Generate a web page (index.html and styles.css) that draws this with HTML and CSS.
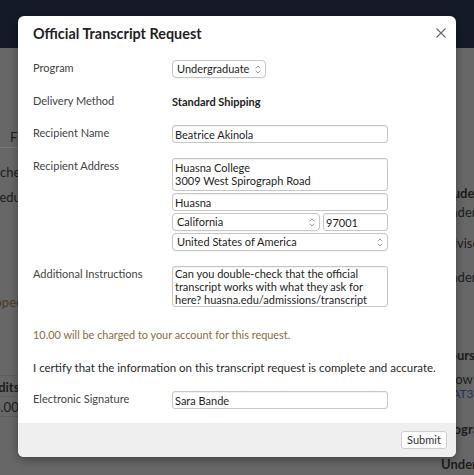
FILE: index.html
```html
<!DOCTYPE html>
<html lang="en">
<head>
<meta charset="utf-8">
<title>Official Transcript Request</title>
<link rel="stylesheet" href="styles.css">
</head>
<body>
<div class="page">
  <div class="topbar"></div>
  <div class="page-main">
    <div class="bg-left">
      <div class="bg-row bg-first"><span class="ind-a">Filters</span></div>
      <div class="bg-row bg-sched"><span class="ind-b">Scheduled</span></div>
      <div class="bg-row bg-sched2"><span class="ind-c">Schedule</span></div>
      <div class="bg-row bg-drop"><span class="ind-d bg-warn">Dropped</span></div>
      <div class="bg-row bg-cred"><span class="ind-e bg-bold">Credits</span></div>
      <div class="bg-row bg-val"><span class="ind-f">3.00</span></div>
    </div>
    <div class="bg-right">
      <div class="r-row r-student bg-bold">Student</div>
      <div class="r-row r-ug">Undergraduate</div>
      <div class="r-row r-adv">Advisor</div>
      <div class="r-row r-ug2">Undergraduate</div>
      <div class="r-row r-courses bg-bold">Courses</div>
      <div class="r-row r-show">Show <span class="r-box"></span></div>
      <div class="r-row r-mat bg-link">MAT300</div>
      <div class="r-row r-prog bg-bold">Program</div>
      <div class="r-row r-ug3 bg-bold">Undergraduate</div>
    </div>
  </div>
</div>

<div class="modal">
  <div class="modal-header">
    <h4 class="modal-title">Official Transcript Request</h4>
    <button class="close" type="button" aria-label="Close">
      <svg width="10" height="10" viewBox="0 0 10 10"><path d="M0.5 0.5 L9.5 9.5 M9.5 0.5 L0.5 9.5" stroke="#6a6a6a" stroke-width="1.1" fill="none"/></svg>
    </button>
  </div>

  <div class="modal-body">
    <div class="form-row">
      <label class="form-label">Program</label>
      <div class="form-value">
        <div class="select-wrap w-program">
          <select class="select"><option>Undergraduate</option></select>
          <svg class="chev" width="6" height="9" viewBox="0 0 6 9"><path d="M0.8 3.3 L3 1 L5.2 3.3 M0.8 5.7 L3 8 L5.2 5.7" stroke="#8a8a8a" stroke-width="0.9" fill="none"/></svg>
        </div>
      </div>
    </div>

    <div class="form-row row-delivery">
      <label class="form-label">Delivery Method</label>
      <div class="form-value static">Standard Shipping</div>
    </div>

    <div class="form-row row-name">
      <label class="form-label">Recipient Name</label>
      <div class="form-value">
        <input class="input w-full" type="text" value="Beatrice Akinola">
      </div>
    </div>

    <div class="form-row">
      <label class="form-label">Recipient Address</label>
      <div class="form-value stack">
        <textarea class="textarea w-full addr" rows="2">Huasna College
3009 West Spirograph Road</textarea>
        <input class="input w-full" type="text" value="Huasna">
        <div class="inline">
          <div class="select-wrap w-state">
            <select class="select"><option>California</option></select>
            <svg class="chev" width="6" height="9" viewBox="0 0 6 9"><path d="M0.8 3.3 L3 1 L5.2 3.3 M0.8 5.7 L3 8 L5.2 5.7" stroke="#8a8a8a" stroke-width="0.9" fill="none"/></svg>
          </div>
          <input class="input w-zip" type="text" value="97001">
        </div>
        <div class="select-wrap w-full">
          <select class="select"><option>United States of America</option></select>
          <svg class="chev" width="6" height="9" viewBox="0 0 6 9"><path d="M0.8 3.3 L3 1 L5.2 3.3 M0.8 5.7 L3 8 L5.2 5.7" stroke="#8a8a8a" stroke-width="0.9" fill="none"/></svg>
        </div>
      </div>
    </div>

    <div class="form-row">
      <label class="form-label">Additional Instructions</label>
      <div class="form-value">
        <textarea class="textarea w-full notes" rows="3">Can you double-check that the official
transcript works with what they ask for
here? huasna.edu/admissions/transcript</textarea>
      </div>
    </div>

    <p class="charge">10.00 will be charged to your account for this request.</p>
    <p class="certify">I certify that the information on this transcript request is complete and accurate.</p>

    <div class="form-row">
      <label class="form-label">Electronic Signature</label>
      <div class="form-value">
        <input class="input w-full" type="text" value="Sara Bande">
      </div>
    </div>
  </div>

  <div class="modal-footer">
    <button class="btn" type="button">Submit</button>
  </div>
</div>
</body>
</html>
```

FILE: styles.css
```css
* { box-sizing: border-box; }

html, body {
  margin: 0;
  padding: 0;
}

body {
  width: 474px;
  height: 475px;
  overflow: hidden;
  position: relative;
  background: #676767;
  font-family: Lato, "Noto Sans", "Liberation Sans", sans-serif;
  color: #222;
}

/* ---------- dimmed page behind the modal ---------- */
.page {
  width: 474px;
  height: 475px;
}

.topbar {
  height: 48px;
  background: #121b27;
}

.page-main {
  display: flex;
  justify-content: space-between;
  font-size: 13px;
  color: #1d1d1d;
  white-space: nowrap;
}

.bg-left {
  width: 100px;
  margin-left: -40px;
}

.bg-row {
  height: 25px;
  line-height: 25px;
}

.bg-first {
  margin-top: 78px;
  height: 22px;
  line-height: 22px;
  border-bottom: 1px solid #777;
}
.bg-sched { margin-top: 12px; }
.bg-drop { margin-top: 80px; }
.bg-cred {
  margin-top: 60px;
  height: 22px;
  line-height: 22px;
  border-top: 1px solid #5d5d5d;
  border-bottom: 1px solid #5d5d5d;
}
.bg-val {
  height: 20px;
  line-height: 20px;
  border-bottom: 1px solid #5d5d5d;
}

.ind-a { padding-left: 50px; }
.ind-b { padding-left: 33px; }
.ind-c { padding-left: 19px; }
.ind-d { padding-left: 13px; }
.ind-e { padding-left: 18px; }
.ind-f { padding-left: 33px; }

.bg-warn { color: #4a3d22; }
.bg-bold { font-weight: 700; }
.bg-link { color: #25335a; }

.bg-right {
  width: 33px;
}

.r-row { height: 18px; line-height: 18px; }
.r-student { margin-top: 135px; height: 20px; line-height: 20px; }
.r-adv { margin-top: 13px; }
.r-ug2 { margin-top: 16px; }
.r-courses { margin-top: 59px; height: 20px; line-height: 20px; }
.r-show { margin-top: 6px; height: 16px; line-height: 16px; display: flex; align-items: center; gap: 4px; }
.r-box {
  display: inline-block;
  width: 20px;
  height: 15px;
  border-radius: 3px;
  background: #7a7a7a;
}
.r-mat { height: 14px; line-height: 14px; font-size: 12px; }
.r-prog { margin-top: 18px; height: 20px; line-height: 20px; }
.r-ug3 { margin-top: 15px; height: 20px; line-height: 20px; }

/* ---------- modal ---------- */
.modal {
  position: absolute;
  left: 18px;
  top: 16px;
  width: 438px;
  height: 441px;
  background: #fff;
  border-radius: 6px;
  box-shadow: 0 3px 10px rgba(0, 0, 0, 0.35);
  overflow: hidden;
  display: flex;
  flex-direction: column;
}

.modal-header {
  flex: none;
  display: flex;
  justify-content: space-between;
  align-items: flex-start;
  height: 44px;
  padding: 8px 10px 0 15px;
}

.modal-title {
  margin: 0;
  font-size: 14.4px;
  line-height: 20px;
  font-weight: 700;
  color: #1f1f1f;
}

.close {
  margin-top: 4px;
  width: 10px;
  height: 10px;
  padding: 0;
  border: 0;
  background: transparent;
  display: flex;
}

.modal-body {
  flex: 1 1 auto;
  min-height: 0;
  padding: 0 15px;
  display: flex;
  flex-direction: column;
}

.form-row {
  display: flex;
  align-items: flex-start;
}
.form-row + .form-row { margin-top: 15px; }
.form-row + .row-delivery { margin-top: 14.5px; }
.row-delivery + .row-name { margin-top: 14.5px; }

.form-label {
  width: 139px;
  flex: none;
  font-size: 11px;
  line-height: 15px;
  color: #444;
}

.form-value {
  font-size: 11px;
}

.static {
  font-weight: 700;
  line-height: 18px;
  color: #222;
}

.stack {
  display: flex;
  flex-direction: column;
  gap: 2px;
}

.inline {
  display: flex;
  gap: 3px;
}

.w-full { width: 216px; }
.w-program { width: 94px; }
.w-state { width: 148px; }
.w-zip { width: 65px; }

.input,
.textarea,
.select {
  font-family: Lato, "Noto Sans", "Liberation Sans", sans-serif;
  font-size: 11px;
  color: #1e1e1e;
  border: 1px solid #c6c6c6;
  border-radius: 3px;
  background: #fff;
  box-shadow: inset 0 1px 1px rgba(0, 0, 0, 0.06);
  margin: 0;
}

.input {
  display: block;
  height: 18px;
  padding: 0 2px;
  line-height: 16px;
}

.textarea {
  display: block;
  resize: none;
  overflow: hidden;
  padding: 2px 2px 0 2px;
  line-height: 13px;
}
.addr { height: 33px; }
.notes { height: 41px; padding-top: 0; }

.select-wrap {
  position: relative;
  height: 18px;
}

.select {
  -webkit-appearance: none;
  appearance: none;
  width: 100%;
  height: 18px;
  padding: 0 14px 0 4px;
  line-height: 16px;
  border-radius: 4px;
  box-shadow: 0 1px 1px rgba(0, 0, 0, 0.04);
  outline: none;
}

.chev {
  position: absolute;
  right: 5px;
  top: 4.5px;
  pointer-events: none;
}

.charge {
  margin: 20px 0 0 0;
  font-size: 10.9px;
  line-height: 16px;
  color: #8a6d3b;
}

.certify {
  margin: 17px 0 15px 0;
  font-size: 11.5px;
  line-height: 16px;
  white-space: nowrap;
  color: #2a2a2a;
}

.modal-footer {
  flex: none;
  height: 34px;
  background: #efefef;
  display: flex;
  justify-content: flex-end;
  align-items: flex-start;
  padding: 8px 9px 0 0;
}

.btn {
  height: 18px;
  width: 46px;
  padding: 0;
  font-family: Lato, "Noto Sans", "Liberation Sans", sans-serif;
  font-size: 11px;
  line-height: 16px;
  color: #333;
  background: #fff;
  border: 1px solid #cfcfcf;
  border-radius: 3px;
}
```
